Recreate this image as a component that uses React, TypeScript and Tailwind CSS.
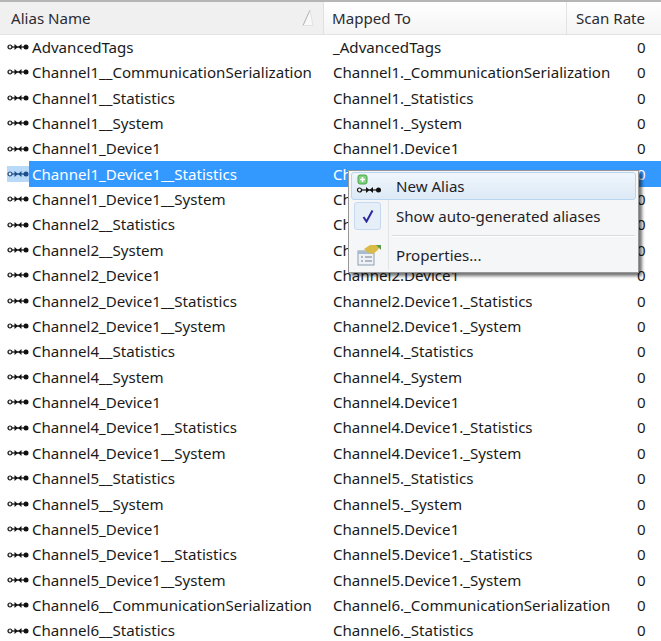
const rows: [string, string][] = [
  ["AdvancedTags", "_AdvancedTags"],
  ["Channel1__CommunicationSerialization", "Channel1._CommunicationSerialization"],
  ["Channel1__Statistics", "Channel1._Statistics"],
  ["Channel1__System", "Channel1._System"],
  ["Channel1_Device1", "Channel1.Device1"],
  ["Channel1_Device1__Statistics", "Channel1.Device1._Statistics"],
  ["Channel1_Device1__System", "Channel1.Device1._System"],
  ["Channel2__Statistics", "Channel2._Statistics"],
  ["Channel2__System", "Channel2._System"],
  ["Channel2_Device1", "Channel2.Device1"],
  ["Channel2_Device1__Statistics", "Channel2.Device1._Statistics"],
  ["Channel2_Device1__System", "Channel2.Device1._System"],
  ["Channel4__Statistics", "Channel4._Statistics"],
  ["Channel4__System", "Channel4._System"],
  ["Channel4_Device1", "Channel4.Device1"],
  ["Channel4_Device1__Statistics", "Channel4.Device1._Statistics"],
  ["Channel4_Device1__System", "Channel4.Device1._System"],
  ["Channel5__Statistics", "Channel5._Statistics"],
  ["Channel5__System", "Channel5._System"],
  ["Channel5_Device1", "Channel5.Device1"],
  ["Channel5_Device1__Statistics", "Channel5.Device1._Statistics"],
  ["Channel5_Device1__System", "Channel5.Device1._System"],
  ["Channel6__CommunicationSerialization", "Channel6._CommunicationSerialization"],
  ["Channel6__Statistics", "Channel6._Statistics"],
];

// rows whose mapped text runs under the context menu
const underMenu = ["Channel1_Device1__Statistics", "Channel1_Device1__System", "Channel2__Statistics", "Channel2__System"];

function AliasIcon({ color = "#111" }: { color?: string }) {
  return (
    <svg width="22" height="8" viewBox="0 0 22 8" fill="none">
      <path d="M1 4H21" stroke={color} strokeWidth="1.2" />
      <circle cx="3" cy="4" r="2" fill="#e8e8e8" stroke={color} strokeWidth="1.2" />
      <path d="M7.500 1L11 4L7.500 7Z" fill={color} />
      <path d="M14.500 1L11 4L14.500 7Z" fill={color} />
      <circle cx="19" cy="4" r="2.500" fill={color} />
    </svg>
  );
}

function ContextMenu() {
  return (
    <div className="absolute left-[348px] top-[170px] w-[291px] h-[103px] bg-[#f5f6f7] border border-[#979797] shadow-[3px_3px_3px_rgba(0,0,0,0.55)] p-[2px] pt-px text-[#1e1e2a]">
      <div className="absolute left-[39px] top-[2px] bottom-[2px] w-px bg-[#e2e3e3]" />
      <div className="relative h-[28px] flex items-center rounded-[3px] border border-[#b8d6f0] bg-gradient-to-b from-[#f0f6fc] to-[#dce9f6]">
        <div className="relative w-[36px] h-full">
          <svg className="absolute left-[4px] top-[1px]" width="26" height="24" viewBox="0 0 26 24" fill="none">
            <rect x="2" y="1" width="9" height="9" rx="2" fill="#7fd07f" stroke="#4aa84a" />
            <path d="M6.500 3V8M4 5.500H9" stroke="#fff" strokeWidth="1.600" />
            <path d="M3 16H24" stroke="#111" strokeWidth="1.200" />
            <circle cx="3.500" cy="16" r="2" fill="#fff" stroke="#111" strokeWidth="1.200" />
            <path d="M10 13L13.500 16L10 19Z" fill="#111" />
            <path d="M17 13L13.500 16L17 19Z" fill="#111" />
            <circle cx="22.500" cy="16" r="2.500" fill="#111" />
          </svg>
        </div>
        <span className="ml-[8px]">New Alias</span>
      </div>
      <div className="relative h-[30px] mt-px flex items-center">
        <div className="ml-[3px] w-[27px] h-[28px] flex items-center justify-center rounded-[3px] border border-[#c5d9ef] bg-[#e6eef8]">
          <svg width="12" height="14" viewBox="0 0 12 14" fill="none">
            <path d="M1.500 8L4.500 12.500L10.500 1.500" stroke="#2a2a9c" strokeWidth="2" />
          </svg>
        </div>
        <span className="ml-[15px]">Show auto-generated aliases</span>
      </div>
      <div className="ml-[41px] mr-px mt-[4px] h-[2px] border-t border-b border-t-[#dcdcdc] border-b-white" />
      <div className="relative h-[32px] mt-[2px] flex items-center">
        <svg className="ml-[6px]" width="24" height="22" viewBox="0 0 24 22" fill="none">
          <rect x="1" y="7" width="16" height="14" fill="#eef2f6" stroke="#8f9fb0" />
          <rect x="1" y="7" width="16" height="3" fill="#a9bccf" />
          <path d="M4 13H6M8 13H15M4 17H6M8 17H15" stroke="#6d7f92" />
          <path d="M7 5L13 1H23L21 6L16 10L10 8Z" fill="#d9bb47" />
          <path d="M19 1H24V6Z" fill="#5d9c4b" />
        </svg>
        <span className="ml-[15px]">Properties...</span>
      </div>
    </div>
  );
}

export default function App() {
  return (
    <div className="relative w-[661px] h-[641px] overflow-hidden bg-white text-[15.1px] text-[#1a1a1a] font-['Noto_Sans','Open_Sans',sans-serif]">
      <div className="h-[2px] bg-[#b5b5b5]" />
      <div className="flex h-[32px] text-[#2b2b33] shadow-[0_1px_0_#e3e3e3]">
        <div className="relative w-[324px] flex items-center pl-[11px] bg-[#f0f0f0] border-r border-[#e0e0e0]">
          Alias Name
          <svg className="absolute left-[302px] top-[7px]" width="12" height="18" viewBox="0 0 12 18" fill="none">
            <path d="M1 16.500L8 1L11 16.500Z" fill="#f8f8f8" />
            <path d="M1 16.500L8 1" stroke="#b0b0b0" />
            <path d="M8 1L11 16.500H1" stroke="#e2e2e2" />
          </svg>
        </div>
        <div className="w-[243px] flex items-center pl-[8px] bg-gradient-to-b from-white to-[#f4f4f4] border-r border-[#e3e3e3]">
          Mapped To
        </div>
        <div className="flex-1 flex items-center pl-[9px] bg-gradient-to-b from-white to-[#f4f4f4]">
          Scan Rate
        </div>
      </div>
      <div className="pt-[0.4px]">
        {rows.map(([alias, mapped]) => {
          const selected = alias === "Channel1_Device1__Statistics";
          return (
            <div key={alias} className={`flex h-[25.38px] items-center ${selected ? "bg-[#3399ff] ml-[29px] text-white" : ""}`}>
              {selected ? (
                <div className="absolute left-[7px] w-[22px] h-[16px] flex items-center bg-[#b9d9f8]">
                  <AliasIcon color="#1d4f8c" />
                </div>
              ) : (
                <div className="w-[32px] pl-[7px] flex items-center">
                  <AliasIcon />
                </div>
              )}
              <div className={selected ? "w-[304px] pl-[3px] whitespace-nowrap" : "w-[301px] whitespace-nowrap"}>{alias}</div>
              <div className={underMenu.includes(alias) ? "w-[15px] overflow-hidden whitespace-nowrap" : "whitespace-nowrap"}>{mapped}</div>
              <div className="absolute left-[637px]">0</div>
            </div>
          );
        })}
      </div>
      <ContextMenu />
    </div>
  );
}
